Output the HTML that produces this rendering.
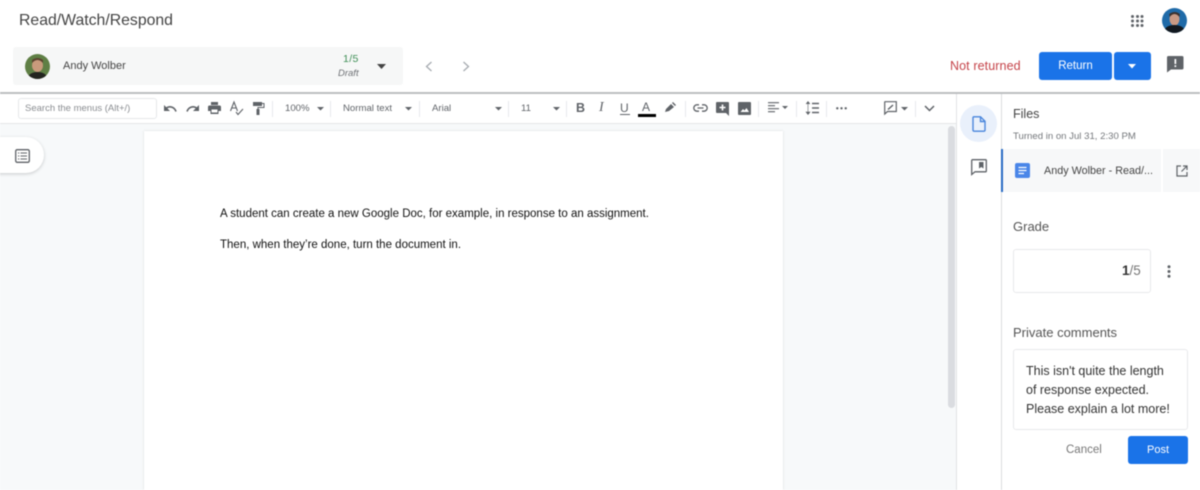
<!DOCTYPE html>
<html><head><meta charset="utf-8">
<style>
html,body{margin:0;padding:0;width:1200px;height:490px;overflow:hidden;background:#fff;font-family:"Liberation Sans",sans-serif;color:#3c4043}
#w{position:absolute;left:0;top:0;width:1200px;height:490px;overflow:hidden;filter:blur(.4px)}
.a{position:absolute;white-space:nowrap}
svg{position:absolute;overflow:visible}
.sep{position:absolute;top:101px;width:1px;height:16px;background:#e8eaec}
.tb{font-size:9.6px;color:#5f6368;top:103px}
.i{fill:#5f6368}
</style></head><body><div id="w">

<div class="a" style="left:19px;top:12px;font-size:15.800px;color:#444">Read/Watch/Respond</div>

<svg style="left:1131px;top:15px" width="14" height="14"><g fill="#5f6368"><circle cx="1.500" cy="1.500" r="1.500"/><circle cx="6.500" cy="1.500" r="1.500"/><circle cx="11" cy="1.500" r="1.500"/><circle cx="1.500" cy="6" r="1.500"/><circle cx="6.500" cy="6" r="1.500"/><circle cx="11" cy="6" r="1.500"/><circle cx="1.500" cy="10.500" r="1.500"/><circle cx="6.500" cy="10.500" r="1.500"/><circle cx="11" cy="10.500" r="1.500"/></g></svg>
<svg style="left:1162px;top:8px" width="25" height="25"><defs><clipPath id="c1"><circle cx="12.500" cy="12.500" r="12.500"/></clipPath></defs><g clip-path="url(#c1)"><rect width="25" height="25" fill="#1f6aa8"/><ellipse cx="12.500" cy="11" rx="5" ry="6.500" fill="#c99a85"/><path d="M7.500 9q5-6 10 0l.3-3q-5-4-10.600 0z" fill="#3b3230"/><path d="M1 25q2-8 11.500-8t11.500 8z" fill="#11181f"/></g></svg>

<div class="a" style="left:13px;top:47px;width:390px;height:38px;background:#f6f7f7;border-radius:3px"></div>
<svg style="left:25px;top:54px" width="25" height="25"><defs><clipPath id="c2"><circle cx="12.500" cy="12.500" r="12.500"/></clipPath></defs><g clip-path="url(#c2)"><rect width="25" height="25" fill="#5f7f45"/><ellipse cx="12.500" cy="11.500" rx="5.500" ry="6.500" fill="#c89a7c"/><path d="M7 9q5.500-6 11 0l0-3q-5.500-4-11 0z" fill="#5a432f"/><path d="M2 25q2-7 10.500-7t10.500 7z" fill="#23241f"/></g></svg>
<div class="a" style="left:63px;top:60px;font-size:11px;color:#444">Andy Wolber</div>
<div class="a" style="left:343px;top:53px;font-size:10.500px;color:#3f8f56;letter-spacing:.4px">1/5</div>
<div class="a" style="left:338px;top:68px;font-size:9.500px;color:#6f7276;font-style:italic">Draft</div>
<svg style="left:377px;top:64px" width="9" height="5"><path d="M0 0h9L4.500 5z" fill="#444"/></svg>
<svg style="left:425px;top:61px" width="8" height="11"><path d="M6.500 1L1.500 5.500L6.500 10" fill="none" stroke="#a6abb0" stroke-width="1.300"/></svg>
<svg style="left:462px;top:61px" width="8" height="11"><path d="M1.500 1L6.500 5.500L1.500 10" fill="none" stroke="#a6abb0" stroke-width="1.300"/></svg>

<div class="a" style="left:950px;top:59px;font-size:12.500px;color:#c5444a;letter-spacing:.1px">Not returned</div>
<div class="a" style="left:1039px;top:52px;width:73px;height:28px;background:#1a73e8;border-radius:3px;color:#fff;font-size:11.500px;text-align:center;line-height:28px">Return</div>
<div class="a" style="left:1114px;top:52px;width:37px;height:28px;background:#1a73e8;border-radius:3px"></div>
<svg style="left:1128px;top:64px" width="9" height="5"><path d="M0 0h8L4 4.500z" fill="#fff"/></svg>
<svg style="left:1167px;top:56px" width="17" height="17"><path d="M1.500 0h13.500a1.500 1.500 0 0 1 1.500 1.500v10.500a1.500 1.500 0 0 1-1.500 1.500H4L0 16.500V1.500A1.500 1.500 0 0 1 1.500 0z" fill="#5f6368"/><path d="M7.500 3h1.700v5H7.500zM7.500 9.300h1.700V11H7.500z" fill="#fff"/></svg>

<div class="a" style="left:0;top:92px;width:1200px;height:2px;background:#bcbec0"></div>

<!-- toolbar -->
<div class="a" style="left:0;top:123px;width:956px;height:1px;background:#e4e6e8"></div>
<div class="a" style="left:18px;top:98px;width:137px;height:19px;border:1px solid #e6e8ea;border-radius:3px;font-size:9.500px;color:#8a8d91;line-height:20px;text-indent:6px">Search the menus (Alt+/)</div>
<svg style="left:164px;top:104px" width="13" height="8"><path d="M12 7.500C10.500 3 5.500 1.500 2.500 4" fill="none" stroke="#5f6368" stroke-width="1.600"/><path d="M0 1v6h6z" fill="#5f6368"/></svg>
<svg style="left:186px;top:104px" width="13" height="8"><path d="M1 7.500C2.500 3 7.500 1.500 10.500 4" fill="none" stroke="#5f6368" stroke-width="1.600"/><path d="M13 1v6H7z" fill="#5f6368"/></svg>
<svg style="left:208px;top:102px" width="13" height="12"><path d="M3 0h7v3H3zM1.500 3.500h10A1.500 1.500 0 0 1 13 5v4h-2.500v3h-8V9H0V5a1.500 1.500 0 0 1 1.500-1.500z" fill="#5f6368"/><rect x="3.500" y="7.500" width="6" height="3" fill="#fff"/></svg>
<svg style="left:230px;top:101px" width="14" height="15"><path d="M.5 10L4 1l3.500 9M1.800 7h4.400" fill="none" stroke="#5f6368" stroke-width="1.100"/><path d="M6 11l2 2.500L13 8" fill="none" stroke="#5f6368" stroke-width="1.100"/></svg>
<svg style="left:253px;top:102px" width="11" height="13"><path d="M0 0h9v4H0z" fill="#5f6368"/><path d="M9 1.500h2v4H5v2" fill="none" stroke="#5f6368" stroke-width="1"/><path d="M3.500 7h3v6h-3z" fill="#5f6368"/></svg>
<div class="sep" style="left:272px"></div>
<div class="a tb" style="left:285px">100%</div>
<svg style="left:317px;top:107px" width="7" height="4"><path d="M0 0h7L3.500 3.500z" class="i"/></svg>
<div class="sep" style="left:330px"></div>
<div class="a tb" style="left:343px">Normal text</div>
<svg style="left:405px;top:107px" width="7" height="4"><path d="M0 0h7L3.500 3.500z" class="i"/></svg>
<div class="sep" style="left:419px"></div>
<div class="a tb" style="left:432px">Arial</div>
<svg style="left:495px;top:107px" width="7" height="4"><path d="M0 0h7L3.500 3.500z" class="i"/></svg>
<div class="sep" style="left:508px"></div>
<div class="a tb" style="left:521px">11</div>
<svg style="left:553px;top:107px" width="7" height="4"><path d="M0 0h7L3.500 3.500z" class="i"/></svg>
<div class="sep" style="left:566px"></div>
<div class="a" style="left:576px;top:101px;font-size:12.500px;font-weight:bold;color:#5f6368">B</div>
<div class="a" style="left:599px;top:100px;font-size:14px;font-style:italic;font-family:'Liberation Serif',serif;color:#5f6368">I</div>
<div class="a" style="left:620px;top:101px;font-size:12px;color:#5f6368">U</div>
<div class="a" style="left:620px;top:114px;width:10px;height:1px;background:#5f6368"></div>
<div class="a" style="left:642px;top:100px;font-size:12px;color:#5f6368">A</div>
<div class="a" style="left:638px;top:114px;width:18px;height:3px;background:#000"></div>
<svg style="left:665px;top:102px" width="11" height="10"><path d="M0 10l1-3 5-5 3 3-5 4zM7 1l1-1 3 3-1 1z" fill="#5f6368"/></svg>
<div class="sep" style="left:685px"></div>
<svg style="left:693px;top:104px" width="15" height="8"><path d="M6 .8H4a3.200 3.200 0 0 0 0 6.400h2M9 .8h2a3.200 3.200 0 0 1 0 6.400H9M4.500 4h6" fill="none" stroke="#5f6368" stroke-width="1.300"/></svg>
<svg style="left:716px;top:102px" width="13" height="14"><path d="M1 0h11a1 1 0 0 1 1 1v13l-3-3H1a1 1 0 0 1-1-1V1a1 1 0 0 1 1-1z" fill="#5f6368"/><path d="M5.700 2.500h1.600v2.200h2.200v1.600H7.300v2.200H5.700V6.300H3.500V4.700h2.200z" fill="#fff"/></svg>
<svg style="left:738px;top:102px" width="13" height="13"><rect width="13" height="13" rx="1" fill="#5f6368"/><path d="M2.500 10l2.500-3 1.500 1.500L8.500 6l2.500 4z" fill="#fff"/></svg>
<div class="sep" style="left:758px"></div>
<svg style="left:768px;top:102px" width="20" height="12"><path d="M0 .7h11M0 3.700h7M0 6.700h11M0 9.700h7" stroke="#5f6368" stroke-width="1.100"/><path d="M14 4h6l-3 3z" fill="#5f6368"/></svg>
<div class="sep" style="left:796px"></div>
<svg style="left:805px;top:101px" width="14" height="14"><path d="M3 1v12M1 3l2-2.500L5 3M1 11l2 2.500L5 11z" fill="#5f6368" stroke="#5f6368" stroke-width=".6"/><path d="M7 2.500h7M7 7h7M7 11.500h7" stroke="#5f6368" stroke-width="1.400"/></svg>
<div class="sep" style="left:826px"></div>
<svg style="left:836px;top:107px" width="11" height="3"><circle cx="1.300" cy="1.300" r="1.200" class="i"/><circle cx="5.500" cy="1.300" r="1.200" class="i"/><circle cx="9.700" cy="1.300" r="1.200" class="i"/></svg>
<svg style="left:884px;top:101px" width="13" height="13"><path d="M1 .7h11.300v9.800H3.500L.7 13V1z" fill="none" stroke="#5f6368" stroke-width="1.200"/><path d="M3.500 8l5-4.500 1 1-5 4.500z" fill="#5f6368"/></svg>
<svg style="left:901px;top:107px" width="7" height="4"><path d="M0 0h7L3.500 3.500z" class="i"/></svg>
<div class="sep" style="left:915px"></div>
<svg style="left:924px;top:105px" width="11" height="7"><path d="M1 1l4.500 4.500L10 1" fill="none" stroke="#5f6368" stroke-width="1.500"/></svg>

<!-- canvas -->
<div class="a" style="left:0;top:124px;width:956px;height:366px;background:#f7f9fa"></div>
<div class="a" style="left:144px;top:131px;width:639px;height:359px;background:#fff;box-shadow:0 0 2px rgba(60,64,67,.18)"></div>
<div class="a" style="left:948px;top:126px;width:7px;height:282px;background:#dadce0;border-radius:4px"></div>
<div class="a" style="left:-20px;top:137px;width:64px;height:36px;background:#fff;border-radius:18px;box-shadow:0 1px 3px rgba(60,64,67,.25)"></div>
<svg style="left:15px;top:149px" width="15" height="14"><rect x=".7" y=".7" width="13.600" height="12.600" rx="1.500" fill="none" stroke="#5f6368" stroke-width="1.300"/><path d="M3 4h1.300M3 7h1.300M3 10h1.300M5.500 4H12M5.500 7H12M5.500 10H12" stroke="#5f6368" stroke-width="1.100"/></svg>

<div class="a" style="left:220px;top:208px;font-size:11.500px;color:#111">A student can create a new Google Doc, for example, in response to an assignment.</div>
<div class="a" style="left:220px;top:239px;font-size:11.500px;color:#111">Then, when they’re done, turn the document in.</div>

<!-- side rail -->
<div class="a" style="left:956px;top:94px;width:1px;height:396px;background:#e2e3e5"></div>
<div class="a" style="left:1001px;top:94px;width:1px;height:396px;background:#dcdddf"></div>
<div class="a" style="left:960px;top:105px;width:37px;height:37px;background:#e9f0fb;border-radius:50%"></div>
<svg style="left:972px;top:116px" width="14" height="16"><path d="M1.500.8h7L13 5.300v8.700a1.200 1.200 0 0 1-1.200 1.200H2.200A1.200 1.200 0 0 1 1 14V1.500zM8.500 1v4.500H13" fill="none" stroke="#4a86dc" stroke-width="1.400"/></svg>
<svg style="left:971px;top:159px" width="16" height="16"><path d="M1.500.7h13a.8.8 0 0 1 .8.8v10.500a.8.8 0 0 1-.8.800H4L.7 15.500V1.500a.8.8 0 0 1 .8-.8z" fill="none" stroke="#5f6368" stroke-width="1.300"/><path d="M8 3h4.500v6.500l-2.200-1.500L8 9.500z" fill="#5f6368"/></svg>

<!-- right panel -->
<div class="a" style="left:1013px;top:107px;font-size:12.500px;color:#444">Files</div>
<div class="a" style="left:1013px;top:131px;font-size:9.600px;color:#74777b">Turned in on Jul 31, 2:30 PM</div>
<div class="a" style="left:1003px;top:149px;width:158px;height:43px;background:#f7f8f9"></div>
<div class="a" style="left:1163px;top:149px;width:37px;height:43px;background:#f7f8f9"></div>
<div class="a" style="left:1001px;top:149px;width:2px;height:43px;background:#2a6bc4"></div>
<svg style="left:1015px;top:163px" width="15" height="15"><rect width="15" height="15" rx="2" fill="#4a86e8"/><path d="M3.500 4.500h8M3.500 7.500h8M3.500 10.500h5.500" stroke="#fff" stroke-width="1.300"/></svg>
<div class="a" style="left:1044px;top:165px;font-size:10.800px;color:#444">Andy Wolber - Read/...</div>
<svg style="left:1176px;top:165px" width="12" height="12"><path d="M5 1H1v10h10V7M7 1h4v4M11 1L5.500 6.500" fill="none" stroke="#5f6368" stroke-width="1.200"/></svg>

<div class="a" style="left:1013px;top:219px;font-size:13px;color:#555">Grade</div>
<div class="a" style="left:1013px;top:249px;width:136px;height:42px;border:1px solid #e8e9eb;border-radius:3px"></div>
<div class="a" style="left:1122px;top:263px;font-size:13.500px;color:#777"><span style="color:#333;font-weight:bold">1</span>/5</div>
<svg style="left:1167px;top:265px" width="4" height="13"><circle cx="2" cy="1.700" r="1.500" class="i"/><circle cx="2" cy="6.500" r="1.500" class="i"/><circle cx="2" cy="11.300" r="1.500" class="i"/></svg>

<div class="a" style="left:1013px;top:325px;font-size:13px;color:#555">Private comments</div>
<div class="a" style="left:1013px;top:349px;width:173px;height:79px;border:1px solid #e8e9eb;border-radius:3px"></div>
<div class="a" style="left:1026px;top:362px;font-size:12.500px;line-height:19px;color:#333">This isn't quite the length<br>of response expected.<br>Please explain a lot more!</div>
<div class="a" style="left:1066px;top:444px;font-size:11.500px;color:#777">Cancel</div>
<div class="a" style="left:1128px;top:436px;width:60px;height:28px;background:#1a73e8;border-radius:3px;color:#fff;font-size:11px;text-align:center;line-height:28px">Post</div>
</div></body></html>
